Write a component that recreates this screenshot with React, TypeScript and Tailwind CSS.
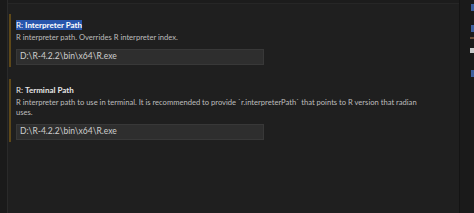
import React from 'react';

const font = { fontFamily: 'Lato, "Noto Sans", sans-serif' };

type SettingProps = {
  category: string;
  name: string;
  description: string;
  value: string;
  selected?: boolean;
};

const SettingItem: React.FC<SettingProps> = ({ category, name, description, value, selected }) => (
  <div className="border-l-2 border-[#5e4818] pl-[5px] pt-[6px] pb-[2px]">
    <div className="text-[8px] leading-[10px] text-[#e8e8e8]">
      <span className={selected ? 'bg-[#2856ad] text-white' : ''}>
        {category}: <span className="font-bold">{name}</span>
      </span>
    </div>
    <div className="mt-[2px] w-[410px] text-[7.6px] leading-[10.5px] text-[#bdbdbd]">{description}</div>
    <div className="mt-[6px] flex h-[16px] w-[248px] items-center border border-[#383838] bg-[#2e2e2e] pl-[3px] text-[8.5px] text-[#cfcfcf]">
      {value}
    </div>
  </div>
);

const App: React.FC = () => {
  return (
    <div className="flex h-[213px] w-[474px] overflow-hidden bg-[#1f1f1f]" style={font}>
      <div className="w-[8px] shrink-0 border-r border-[#2a2a2a] bg-[#1a1a1a]" />
      <div className="flex flex-1 flex-col">
        <div className="h-[4px] border-b border-[#262626] bg-[#1c1c1c]" />
        <div className="flex flex-col gap-[12px] pl-[1px] pt-[10px]">
          <SettingItem
            category="R"
            name="Interpreter Path"
            description="R interpreter path. Overrides R interpreter index."
            value="D:\R-4.2.2\bin\x64\R.exe"
            selected
          />
          <SettingItem
            category="R"
            name="Terminal Path"
            description="R interpreter path to use in terminal. It is recommended to provide `r.interpreterPath` that points to R version that radian uses."
            value="D:\R-4.2.2\bin\x64\R.exe"
          />
        </div>
      </div>
      <div className="relative w-[15px] shrink-0 border-l border-[#141414] bg-[#1a1a1a]">
        <div className="absolute right-0 top-[4px] h-[7px] w-[3px] bg-[#3d5f9e]" />
        <div className="absolute right-0 top-[25px] h-[7px] w-[3px] bg-[#3d5f9e]" />
        <div className="absolute right-0 top-[37px] h-[2px] w-[4px] bg-[#6a4e3a]" />
        <div className="absolute right-0 top-[48px] h-[5px] w-[4px] bg-[#c8c8c8]" />
        <div className="absolute right-0 top-[70px] h-[7px] w-[3px] bg-[#3d5f9e]" />
      </div>
    </div>
  );
};

export default App;
